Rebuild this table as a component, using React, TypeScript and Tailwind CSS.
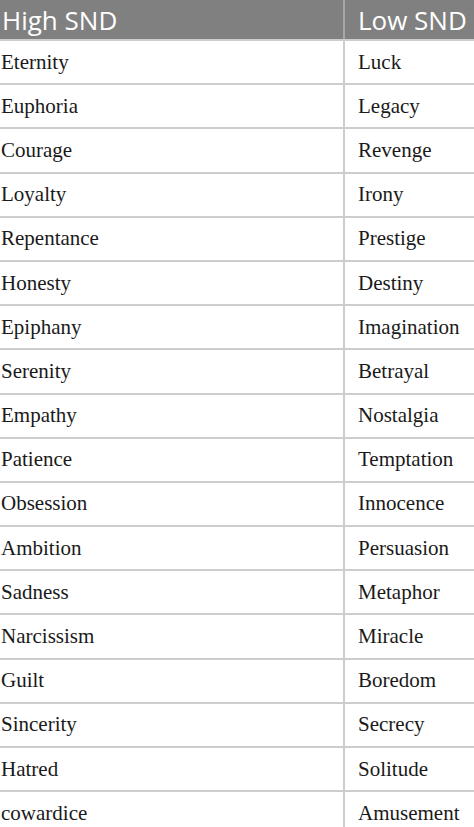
import React from "react";

const rows: [string, string][] = [
  ["Eternity", "Luck"],
  ["Euphoria", "Legacy"],
  ["Courage", "Revenge"],
  ["Loyalty", "Irony"],
  ["Repentance", "Prestige"],
  ["Honesty", "Destiny"],
  ["Epiphany", "Imagination"],
  ["Serenity", "Betrayal"],
  ["Empathy", "Nostalgia"],
  ["Patience", "Temptation"],
  ["Obsession", "Innocence"],
  ["Ambition", "Persuasion"],
  ["Sadness", "Metaphor"],
  ["Narcissism", "Miracle"],
  ["Guilt", "Boredom"],
  ["Sincerity", "Secrecy"],
  ["Hatred", "Solitude"],
  ["cowardice", "Amusement"],
];

export default function App() {
  return (
    <div className="w-[474px] h-[827px] overflow-hidden bg-white">
      <div className="flex h-[39px] bg-[#808080] text-white text-[26px] font-['Open_Sans',sans-serif] leading-none">
        <div className="w-[345px] flex items-center pl-[2px] border-r-2 border-[#a8a8a8]">High SND</div>
        <div className="flex-1 flex items-center pl-[13px] whitespace-nowrap">Low SND</div>
      </div>
      {rows.map(([a, b], i) => (
        <div
          key={i}
          className="flex h-[44.2px] border-t-2 border-[#cdcdcd] text-[21px] text-[#1a1a1a] font-['Liberation_Serif',serif] leading-none"
        >
          <div className="w-[345px] flex items-center pl-[1px] border-r-2 border-[#cdcdcd]">{a}</div>
          <div className="flex-1 flex items-center pl-[13px] whitespace-nowrap">{b}</div>
        </div>
      ))}
    </div>
  );
}
